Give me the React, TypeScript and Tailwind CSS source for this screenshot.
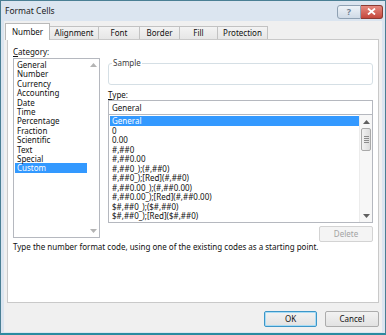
import React from "react";

const categories = [
  "General",
  "Number",
  "Currency",
  "Accounting",
  "Date",
  "Time",
  "Percentage",
  "Fraction",
  "Scientific",
  "Text",
  "Special",
  "Custom",
];

const types = [
  "General",
  "0",
  "0.00",
  "#,##0",
  "#,##0.00",
  "#,##0_);(#,##0)",
  "#,##0_);[Red](#,##0)",
  "#,##0.00_);(#,##0.00)",
  "#,##0.00_);[Red](#,##0.00)",
  "$#,##0_);($#,##0)",
  "$#,##0_);[Red]($#,##0)",
];

function Arrow({ up, color }: { up?: boolean; color: string }) {
  return (
    <svg width="7" height="4" viewBox="0 0 7 4">
      <path d={up ? "M0 4 L3.5 0 L7 4 Z" : "M0 0 L3.5 4 L7 0 Z"} fill={color} />
    </svg>
  );
}

const tabs = [
  { label: "Alignment", w: "w-[49px]" },
  { label: "Font", w: "w-[41px]" },
  { label: "Border", w: "w-[40px]" },
  { label: "Fill", w: "w-[38px]" },
  { label: "Protection", w: "w-[50px]" },
];

export default function App() {
  return (
    <div className="w-[386px] h-[335px] flex flex-col bg-[#dbe5f0] border-x border-t border-[#4a7f94] border-b-2 border-b-[#2a8ba0] pb-[1px] font-['Noto_Sans',sans-serif] text-[8px] text-[#111] overflow-hidden">
      {/* Title bar */}
      <div className="h-[20px] flex items-center justify-between pl-[4px] pr-[2px]">
        <span className="text-[8.5px] text-[#1b1b1b] leading-[10px]">Format Cells</span>
        <div className="flex items-center mt-[1px]">
          <div className="w-[24px] h-[14px] border border-[#8fa1b3] rounded-l-[3px] bg-gradient-to-b from-[#eef3f8] to-[#cfdae6] flex items-center justify-center text-[9px] font-bold text-[#6d7f92] leading-none">
            ?
          </div>
          <div className="w-[22px] h-[14px] border border-[#8a3b33] border-l-0 rounded-r-[3px] bg-gradient-to-b from-[#e58a80] to-[#c4473c] flex items-center justify-center">
            <svg width="9" height="7" viewBox="0 0 9 7">
              <path d="M1 0.5 L8 6.5 M8 0.5 L1 6.5" stroke="#ffffff" strokeWidth="1.8" />
            </svg>
          </div>
        </div>
      </div>

      {/* Client area */}
      <div className="flex-1 mx-[3px] bg-[#f0f0f0] flex flex-col pt-[2px]">
        {/* Tabs */}
        <div className="flex items-end pl-[1px] h-[16px] relative z-10">
          <div className="w-[45px] h-[17px] -mb-px bg-white border border-b-0 border-[#b9b9b9] flex items-center justify-center leading-none pb-[1px]">
            Number
          </div>
          {tabs.map((t) => (
            <div
              key={t.label}
              className={`${t.w} h-[13px] border-t border-r border-[#c2c2c2] bg-gradient-to-b from-[#f3f3f3] to-[#e6e6e6] flex items-center justify-center leading-none`}
            >
              {t.label}
            </div>
          ))}
        </div>

        {/* Panel */}
        <div className="ml-[3px] w-[372px] h-[264px] bg-white border border-[#c9c9c9] pl-[5px] pr-[5px] pt-[6px] flex flex-col">
          <div className="flex gap-[8px]">
            {/* Left column */}
            <div className="flex flex-col w-[87px]">
              <div className="h-[12px] leading-[11px]">
                <span className="underline">C</span>ategory:
              </div>
              <div className="h-[180px] border border-[#b5b8bf] bg-white flex">
                <div className="flex-1 pt-[1px] pl-[1px]">
                  {categories.map((c) => (
                    <div
                      key={c}
                      className={`leading-[9.4px] h-[9.4px] pl-[2px] whitespace-nowrap ${
                        c === "Custom" ? "bg-[#3399ff] text-white" : ""
                      }`}
                    >
                      {c}
                    </div>
                  ))}
                </div>
                <div className="w-[12px] flex flex-col justify-between">
                  <div className="h-[12px] flex items-center justify-center">
                    <Arrow up color="#b4b4b4" />
                  </div>
                  <div className="h-[12px] flex items-center justify-center">
                    <Arrow color="#b4b4b4" />
                  </div>
                </div>
              </div>
            </div>

            {/* Right column */}
            <div className="flex flex-col w-[265px] pt-[12px]">
              <fieldset className="h-[27px] border border-[#d5dfe5] rounded-[3px] px-[3px] m-0 min-w-0">
                <legend className="px-[1px] leading-[10px] text-[#3c3c3c]">Sample</legend>
              </fieldset>
              <div className="mt-[4px] h-[11px] leading-[11px]">
                <span className="underline">T</span>ype:
              </div>
              <div className="h-[15px] border border-[#b5b8bf] bg-white flex items-center pl-[3px] leading-none">
                General
              </div>
              <div className="h-[108px] border border-[#b5b8bf] border-t-0 bg-white flex">
                <div className="flex-1 pt-[1px] pl-[1px]">
                  {types.map((t, i) => (
                    <div
                      key={t}
                      className={`leading-[9.5px] h-[9.5px] pl-[2px] whitespace-nowrap ${
                        i === 0 ? "bg-[#3399ff] text-white" : ""
                      }`}
                    >
                      {t}
                    </div>
                  ))}
                </div>
                <div className="w-[13px] flex flex-col bg-[#f7f7f7] border-l border-[#ececec]">
                  <div className="h-[13px] flex items-center justify-center">
                    <Arrow up color="#606060" />
                  </div>
                  <div className="mx-[1px] h-[23px] border border-[#a9a9a9] rounded-[2px] bg-gradient-to-r from-[#f2f2f2] to-[#dcdcdc] flex flex-col items-center justify-center gap-[1px]">
                    <div className="w-[5px] h-px bg-[#8c8c8c]" />
                    <div className="w-[5px] h-px bg-[#8c8c8c]" />
                    <div className="w-[5px] h-px bg-[#8c8c8c]" />
                    <div className="w-[5px] h-px bg-[#8c8c8c]" />
                  </div>
                  <div className="flex-1" />
                  <div className="h-[13px] flex items-center justify-center">
                    <Arrow color="#606060" />
                  </div>
                </div>
              </div>
              <div className="mt-[3px] self-end w-[54px] h-[16px] border border-[#d3d3d3] rounded-[2px] bg-[#f4f4f4] text-[#a3a3a3] flex items-center justify-center leading-none">
                Delete
              </div>
            </div>
          </div>
          <div className="leading-[9px] whitespace-nowrap">
            Type the number format code, using one of the existing codes as a starting point.
          </div>
        </div>

        {/* Buttons */}
        <div className="mt-[8px] flex justify-end gap-[8px] pr-[3px]">
          <div className="w-[53px] h-[16px] border border-[#3c96c8] rounded-[2px] bg-gradient-to-b from-[#f2f2f2] to-[#e2e2e2] shadow-[inset_0_0_0_1px_#a8dcf5] flex items-center justify-center leading-none">
            OK
          </div>
          <div className="w-[54px] h-[16px] border border-[#acacac] rounded-[2px] bg-gradient-to-b from-[#f2f2f2] to-[#e2e2e2] flex items-center justify-center leading-none">
            Cancel
          </div>
        </div>
      </div>
    </div>
  );
}
